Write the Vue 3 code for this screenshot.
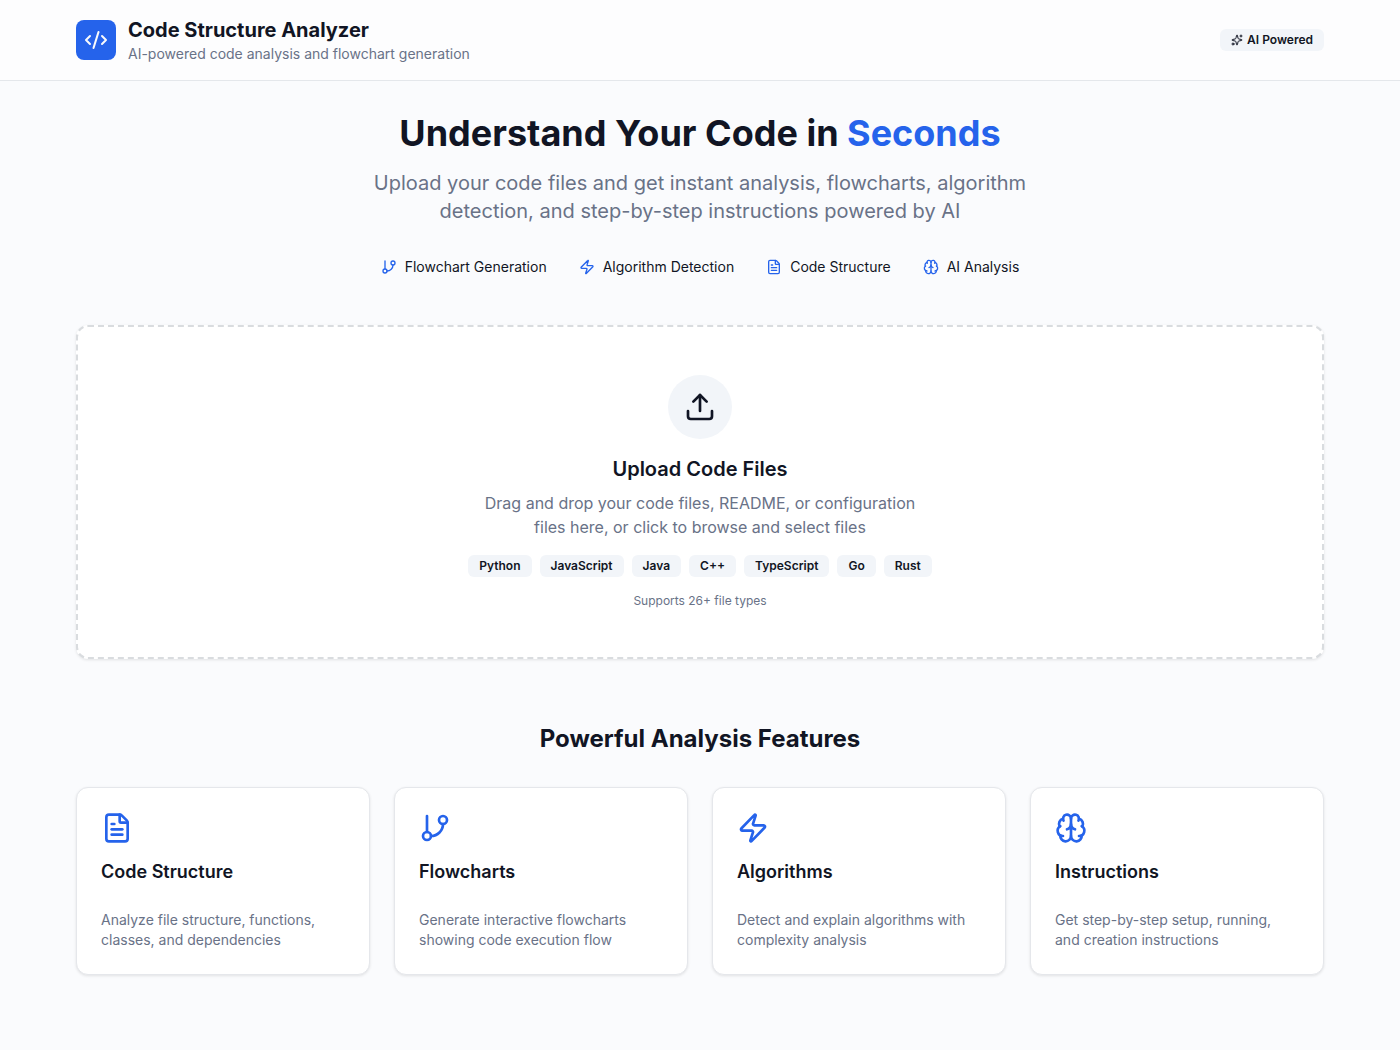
<script setup>
import { h, ref } from 'vue'

const shapes = {
  code: [
    ['path', { d: 'm18 16 4-4-4-4' }],
    ['path', { d: 'm6 8-4 4 4 4' }],
    ['path', { d: 'm14.5 4-5 16' }]
  ],
  sparkles: [
    ['path', { d: 'M11.017 2.814a1 1 0 0 1 1.966 0l1.051 5.558a2 2 0 0 0 1.594 1.594l5.558 1.051a1 1 0 0 1 0 1.966l-5.558 1.051a2 2 0 0 0-1.594 1.594l-1.051 5.558a1 1 0 0 1-1.966 0l-1.051-5.558a2 2 0 0 0-1.594-1.594l-5.558-1.051a1 1 0 0 1 0-1.966l5.558-1.051a2 2 0 0 0 1.594-1.594z' }],
    ['path', { d: 'M20 2v4' }],
    ['path', { d: 'M22 4h-4' }],
    ['circle', { cx: 4, cy: 20, r: 2 }]
  ],
  branch: [
    ['path', { d: 'M6 3v12' }],
    ['circle', { cx: 18, cy: 6, r: 3 }],
    ['circle', { cx: 6, cy: 18, r: 3 }],
    ['path', { d: 'M18 9a9 9 0 0 1-9 9' }]
  ],
  zap: [
    ['path', { d: 'M4 14a1 1 0 0 1-.78-1.63l9.9-10.2a.5.5 0 0 1 .86.46l-1.92 6.02A1 1 0 0 0 13 10h7a1 1 0 0 1 .78 1.63l-9.9 10.2a.5.5 0 0 1-.86-.46l1.92-6.02A1 1 0 0 0 11 14z' }]
  ],
  file: [
    ['path', { d: 'M6 22a2 2 0 0 1-2-2V4a2 2 0 0 1 2-2h8a2.4 2.4 0 0 1 1.704.706l3.588 3.588A2.4 2.4 0 0 1 20 8v12a2 2 0 0 1-2 2z' }],
    ['path', { d: 'M14 2v5a1 1 0 0 0 1 1h5' }],
    ['path', { d: 'M10 9H8' }],
    ['path', { d: 'M16 13H8' }],
    ['path', { d: 'M16 17H8' }]
  ],
  brain: [
    ['path', { d: 'M12 18V5' }],
    ['path', { d: 'M15 13a4.17 4.17 0 0 1-3-4 4.17 4.17 0 0 1-3 4' }],
    ['path', { d: 'M17.598 6.5A3 3 0 1 0 12 5a3 3 0 1 0-5.598 1.5' }],
    ['path', { d: 'M17.997 5.125a4 4 0 0 1 2.526 5.77' }],
    ['path', { d: 'M18 18a4 4 0 0 0 2-7.464' }],
    ['path', { d: 'M19.967 17.483A4 4 0 1 1 12 18a4 4 0 1 1-7.967-.517' }],
    ['path', { d: 'M6 18a4 4 0 0 1-2-7.464' }],
    ['path', { d: 'M6.003 5.125a4 4 0 0 0-2.526 5.77' }]
  ],
  upload: [
    ['path', { d: 'M12 3v12' }],
    ['path', { d: 'm17 8-5-5-5 5' }],
    ['path', { d: 'M21 15v4a2 2 0 0 1-2 2H5a2 2 0 0 1-2-2v-4' }]
  ]
}

function Icon(props) {
  return h(
    'svg',
    {
      width: props.size,
      height: props.size,
      viewBox: '0 0 24 24',
      fill: 'none',
      stroke: 'currentColor',
      'stroke-width': 2,
      'stroke-linecap': 'round',
      'stroke-linejoin': 'round',
      'aria-hidden': 'true'
    },
    shapes[props.name].map(([tag, attrs]) => h(tag, attrs))
  )
}
Icon.props = ['name', 'size']

const highlights = [
  { icon: 'branch', label: 'Flowchart Generation' },
  { icon: 'zap', label: 'Algorithm Detection' },
  { icon: 'file', label: 'Code Structure' },
  { icon: 'brain', label: 'AI Analysis' }
]

const languages = ['Python', 'JavaScript', 'Java', 'C++', 'TypeScript', 'Go', 'Rust']

const features = [
  { icon: 'file', title: 'Code Structure', text: 'Analyze file structure, functions, classes, and dependencies' },
  { icon: 'branch', title: 'Flowcharts', text: 'Generate interactive flowcharts showing code execution flow' },
  { icon: 'zap', title: 'Algorithms', text: 'Detect and explain algorithms with complexity analysis' },
  { icon: 'brain', title: 'Instructions', text: 'Get step-by-step setup, running, and creation instructions' }
]

const picker = ref(null)
</script>

<template>
  <div class="page">
    <header class="topbar">
      <div class="container topbar-row">
        <div class="brand">
          <div class="logo"><Icon name="code" size="24" /></div>
          <div>
            <h1 class="brand-name">Code Structure Analyzer</h1>
            <p class="brand-tagline">AI-powered code analysis and flowchart generation</p>
          </div>
        </div>
        <span class="badge"><Icon name="sparkles" size="12" />AI Powered</span>
      </div>
    </header>

    <main class="container main">
      <section class="hero">
        <h2 class="hero-title">Understand Your Code in <span class="accent">Seconds</span></h2>
        <p class="hero-text">
          Upload your code files and get instant analysis, flowcharts, algorithm detection, and
          step-by-step instructions powered by AI
        </p>
        <ul class="highlights">
          <li v-for="item in highlights" :key="item.label">
            <Icon class="accent" :name="item.icon" size="16" />{{ item.label }}
          </li>
        </ul>
      </section>

      <button type="button" class="dropzone" @click="picker.click()">
        <span class="upload-mark"><Icon name="upload" size="32" /></span>
        <span class="dropzone-title">Upload Code Files</span>
        <span class="dropzone-text">
          Drag and drop your code files, README, or configuration files here, or click to browse and
          select files
        </span>
        <span class="languages">
          <span v-for="language in languages" :key="language" class="badge">{{ language }}</span>
        </span>
        <span class="note">Supports 26+ file types</span>
      </button>
      <input ref="picker" type="file" multiple hidden aria-label="Code files" />

      <section class="features">
        <h2 class="features-title">Powerful Analysis Features</h2>
        <div class="cards">
          <article v-for="feature in features" :key="feature.title" class="card">
            <Icon class="accent card-icon" :name="feature.icon" size="32" />
            <h3 class="card-title">{{ feature.title }}</h3>
            <p class="card-text">{{ feature.text }}</p>
          </article>
        </div>
      </section>
    </main>
  </div>
</template>

<style>
body {
  margin: 0;
  background: #fafbfd;
}
</style>

<style scoped>
.page {
  min-height: 100vh;
  background: #fafbfd;
  color: #111524;
  font-family: Inter, 'Liberation Sans', sans-serif;
  font-size: 16px;
  line-height: 24px;
}
h1,
h2,
h3,
p,
ul {
  margin: 0;
  padding: 0;
}
svg {
  display: block;
  flex-shrink: 0;
}
.accent {
  color: #2563eb;
}
.container {
  box-sizing: border-box;
  width: 100%;
  max-width: 1280px;
  margin: 0 auto;
  padding: 0 16px;
}
.topbar {
  background: #fdfdfe;
  border-bottom: 1px solid #e4e7eb;
}
.topbar-row {
  display: flex;
  align-items: center;
  justify-content: space-between;
  padding: 16px;
}
.brand {
  display: flex;
  align-items: center;
  gap: 12px;
}
.logo {
  display: flex;
  padding: 8px;
  border-radius: 8px;
  background: #2563eb;
  color: #f8fafc;
}
.brand-name {
  font-size: 20px;
  font-weight: 700;
  line-height: 28px;
}
.brand-tagline {
  color: #697287;
  font-size: 14px;
  line-height: 20px;
}
.badge {
  display: inline-flex;
  align-items: center;
  gap: 4px;
  padding: 3px 11px;
  border-radius: 6px;
  background: #f2f5f9;
  font-size: 12px;
  font-weight: 600;
  line-height: 16px;
}
.main {
  padding-top: 32px;
  padding-bottom: 32px;
}
.hero {
  margin-bottom: 48px;
  text-align: center;
}
.hero-title {
  margin-bottom: 16px;
  font-size: 36px;
  font-weight: 700;
  line-height: 40px;
}
.hero-text {
  max-width: 672px;
  margin: 0 auto 32px;
  color: #697287;
  font-size: 20px;
  line-height: 28px;
}
.highlights {
  display: flex;
  flex-wrap: wrap;
  justify-content: center;
  gap: 32px;
  list-style: none;
  font-size: 14px;
  line-height: 20px;
}
.highlights li {
  display: flex;
  align-items: center;
  gap: 8px;
}
.dropzone {
  display: flex;
  flex-direction: column;
  align-items: center;
  box-sizing: border-box;
  width: 100%;
  margin: 0 0 64px;
  padding: 48px;
  border: 2px dashed #d9dcdf;
  border-radius: 12px;
  background: #fff;
  box-shadow: 0 1px 3px rgb(0 0 0 / 10%);
  color: inherit;
  font: inherit;
  cursor: pointer;
}
.upload-mark {
  padding: 16px;
  margin-bottom: 16px;
  border-radius: 50%;
  background: #f2f5f9;
}
.dropzone-title {
  margin-bottom: 8px;
  font-size: 20px;
  font-weight: 600;
  line-height: 28px;
}
.dropzone-text {
  max-width: 448px;
  margin-bottom: 16px;
  color: #697287;
}
.languages {
  display: flex;
  flex-wrap: wrap;
  justify-content: center;
  gap: 8px;
  margin-bottom: 16px;
}
.note {
  color: #697287;
  font-size: 12px;
  line-height: 16px;
}
.features-title {
  margin-bottom: 32px;
  font-size: 24px;
  font-weight: 700;
  line-height: 32px;
  text-align: center;
}
.cards {
  display: grid;
  grid-template-columns: repeat(auto-fit, minmax(240px, 1fr));
  gap: 24px;
}
.card {
  padding: 24px;
  border: 1px solid #e5e7eb;
  border-radius: 12px;
  background: #fff;
  box-shadow: 0 1px 3px rgb(0 0 0 / 10%);
}
.card-icon {
  margin-bottom: 14px;
}
.card-title {
  margin-bottom: 24px;
  font-size: 18px;
  font-weight: 600;
  line-height: 28px;
}
.card-text {
  color: #697287;
  font-size: 14px;
  line-height: 20px;
}
</style>
